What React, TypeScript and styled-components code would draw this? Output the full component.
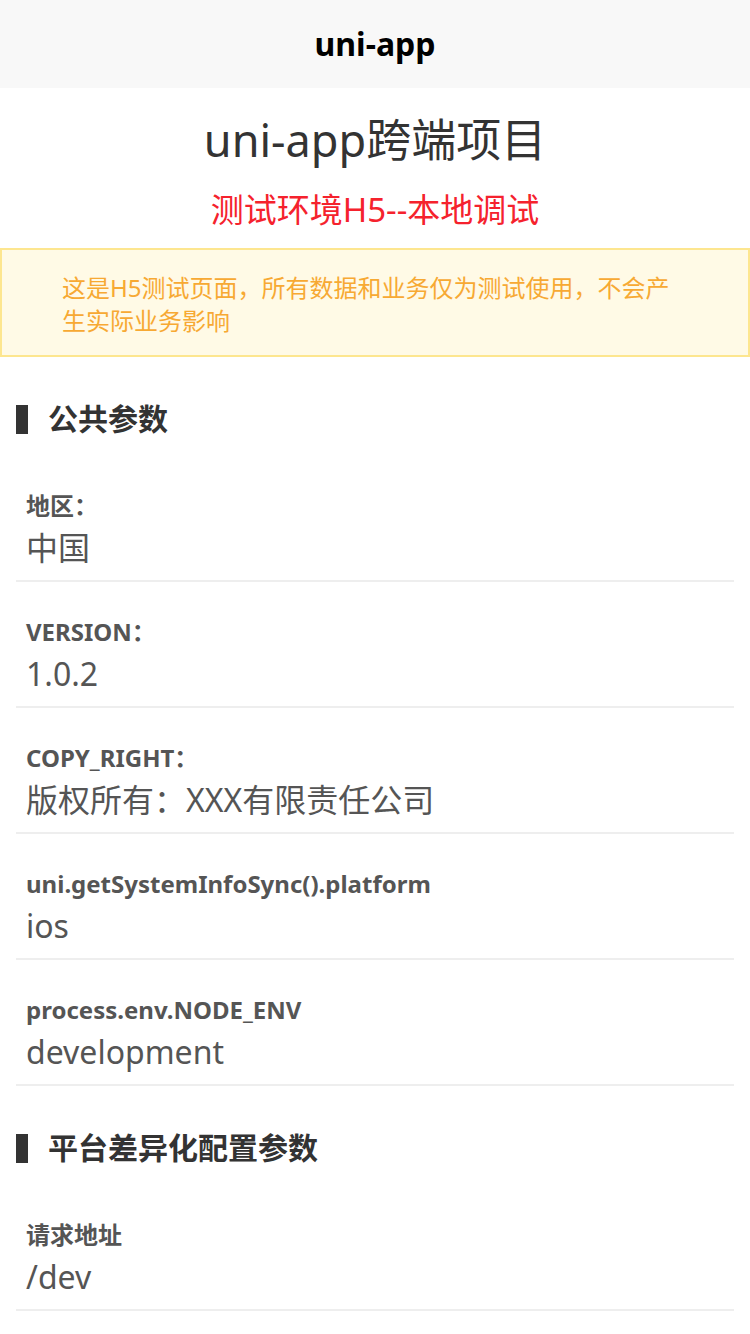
import * as React from "react";
import styled, { createGlobalStyle } from "styled-components";

const GlobalStyle = createGlobalStyle`
  html, body {
    margin: 0;
    padding: 0;
    background: #fff;
  }
  body {
    font-family: "Noto Sans", "Noto Sans CJK SC", sans-serif;
  }
  * {
    box-sizing: border-box;
  }
`;

const SPage = styled.div`
  width: 750px;
  min-height: 1334px;
  background: #fff;
`;

const SNavBar = styled.header`
  height: 88px;
  line-height: 88px;
  background: #f8f8f8;
  text-align: center;
  font-size: 32px;
  font-weight: 700;
  color: #000;
`;

const STitle = styled.h1`
  margin: 0;
  padding-top: 20px;
  line-height: 64px;
  font-size: 45px;
  font-weight: 400;
  color: #333;
  text-align: center;
`;

const SSubTitle = styled.div`
  margin-top: 14px;
  line-height: 48px;
  font-size: 33px;
  color: #f5222d;
  text-align: center;
`;

const SNotice = styled.div`
  margin-top: 14px;
  padding: 21px 76px 18px 60px;
  border: 2px solid #fde68f;
  background: #fffae6;
  color: #f7a933;
  font-size: 24px;
  line-height: 33px;
`;

const SSectionHeader = styled.h2`
  display: flex;
  align-items: center;
  gap: 20px;
  margin: 39px 0 14px;
  padding-left: 16px;
  line-height: 46px;
  font-size: 30px;
  font-weight: 700;
  color: #333;

  &::before {
    content: "";
    width: 12px;
    height: 29px;
    background: #333;
  }
`;

const SList = styled.div`
  margin: 0 16px;
`;

const SItem = styled.div`
  padding: 32px 10px 8px;
  border-bottom: 2px solid #eee;
`;

const SLabel = styled.div`
  line-height: 36px;
  font-size: 24px;
  font-weight: 700;
  color: #555;
`;

const SValue = styled.div`
  line-height: 48px;
  font-size: 32px;
  color: #555;
`;

type Param = { label: string; value: string };

const commonParams: Param[] = [
  { label: "地区：", value: "中国" },
  { label: "VERSION：", value: "1.0.2" },
  { label: "COPY_RIGHT：", value: "版权所有：XXX有限责任公司" },
  { label: "uni.getSystemInfoSync().platform", value: "ios" },
  { label: "process.env.NODE_ENV", value: "development" },
];

const platformParams: Param[] = [{ label: "请求地址", value: "/dev" }];

const ParamList = ({ items }: { items: Param[] }) => (
  <SList>
    {items.map((item) => (
      <SItem key={item.label}>
        <SLabel>{item.label}</SLabel>
        <SValue>{item.value}</SValue>
      </SItem>
    ))}
  </SList>
);

const App = () => (
  <SPage>
    <GlobalStyle />
    <SNavBar>uni-app</SNavBar>
    <STitle>uni-app跨端项目</STitle>
    <SSubTitle>测试环境H5--本地调试</SSubTitle>
    <SNotice>
      这是H5测试页面，所有数据和业务仅为测试使用，不会产生实际业务影响
    </SNotice>
    <SSectionHeader>公共参数</SSectionHeader>
    <ParamList items={commonParams} />
    <SSectionHeader>平台差异化配置参数</SSectionHeader>
    <ParamList items={platformParams} />
  </SPage>
);

export default App;
